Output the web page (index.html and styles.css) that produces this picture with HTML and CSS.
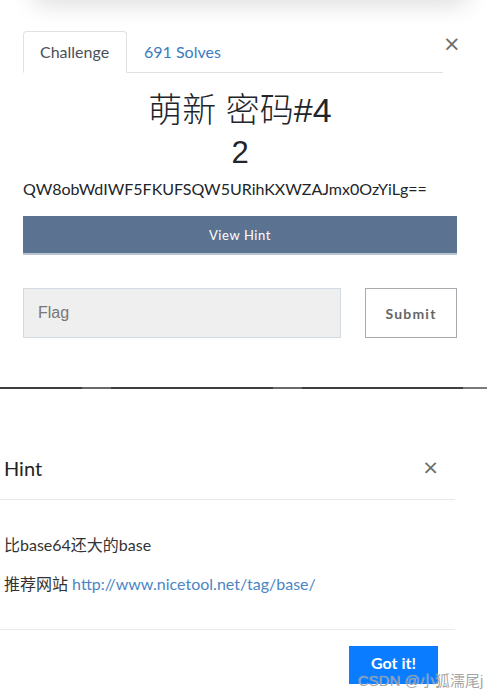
FILE: index.html
```html
<!DOCTYPE html>
<html lang="zh">
<head>
<meta charset="utf-8">
<link rel="stylesheet" href="styles.css">
</head>
<body>
<div class="page">
  <div class="card-shadow"></div>
  <section class="challenge">
    <div class="tabs-row">
      <ul class="tabs">
        <li class="tab active">Challenge</li>
        <li class="tab link">691 Solves</li>
      </ul>
      <span class="close">&times;</span>
    </div>
    <h1 class="title">萌新 密码#4</h1>
    <div class="value">2</div>
    <p class="desc">QW8obWdIWF5FKUFSQW5URihKXWZAJmx0OzYiLg==</p>
    <div class="hint-btn">View Hint</div>
    <div class="submit-row">
      <div class="flag-input">Flag</div>
      <div class="submit-btn">Submit</div>
    </div>
  </section>
  <div class="divider"></div>
  <section class="modal">
    <div class="modal-header">
      <span class="modal-title">Hint</span>
      <span class="modal-close">&times;</span>
    </div>
    <div class="modal-body">
      <p class="line">比base64还大的base</p>
      <p class="line">推荐网站 <span class="url">http://www.nicetool.net/tag/base/</span></p>
    </div>
    <div class="modal-footer">
      <div class="got-it">Got it!</div>
      <span class="watermark">CSDN @小狐濡尾j</span>
    </div>
  </section>
</div>
</body>
</html>
```

FILE: styles.css
```css
* { box-sizing: border-box; }
html, body { margin: 0; padding: 0; background: #fff; }
body {
  font-family: Lato, "Noto Sans CJK SC", sans-serif;
  color: #212529;
  width: 501px;
  height: 697px;
  overflow: hidden;
}
.page { position: relative; }

.card-shadow {
  height: 40px;
  margin: -40px 32px 0 32px;
  border-radius: 12px;
  background: #fff;
  box-shadow: 0 4px 24px rgba(0,0,0,0.14);
}

.challenge { padding: 0 44px 0 23px; }

.tabs-row {
  display: flex;
  align-items: flex-start;
  margin-top: 31px;
}
.tabs {
  flex: 1;
  display: flex;
  list-style: none;
  margin: 0;
  padding: 0;
  border-bottom: 1px solid #dee2e6;
}
.tab {
  font-size: 16px;
  line-height: 24px;
  padding: 8px 16px;
  border: 1px solid transparent;
  border-top-left-radius: 4px;
  border-top-right-radius: 4px;
  margin-bottom: -1px;
  color: #495057;
}
.tab.active {
  border-color: #dee2e6 #dee2e6 #fff;
  background: #fff;
  width: 104px;
}
.tab.link { color: #3a7cc2; }
.close {
  width: 14px;
  font-size: 21px;
  line-height: 24px;
  margin-top: 1px;
  color: #6c6c6c;
  font-family: "DejaVu Sans", sans-serif;
  text-align: center;
}

.title {
  margin: 17px 0 0;
  text-align: center;
  font-family: "Liberation Sans", "Noto Sans CJK SC", sans-serif;
  font-weight: 300;
  font-size: 34px;
  line-height: 40px;
  color: #212529;
}
.value {
  margin-top: 5px;
  text-align: center;
  font-family: "Liberation Sans", sans-serif;
  font-size: 31px;
  line-height: 36px;
}
.desc {
  margin: 7px 0 0;
  font-size: 16px;
  line-height: 22px;
}
.hint-btn {
  margin-top: 16px;
  height: 39px;
  background: #5b7290;
  border-bottom: 2px solid #b8c4d2;
  color: #fff;
  font-size: 13px;
  font-weight: 400;
  letter-spacing: 0.6px;
  display: flex;
  align-items: center;
  justify-content: center;
}
.submit-row {
  margin-top: 33px;
  display: flex;
  justify-content: space-between;
}
.flag-input {
  width: 318px;
  height: 50px;
  background: #efefef;
  border: 1px solid #d3dae2;
  padding-left: 14px;
  display: flex;
  align-items: center;
  font-family: "Liberation Sans", Arial, sans-serif;
  font-size: 16px;
  color: #777;
}
.submit-btn {
  width: 92px;
  height: 50px;
  border: 1px solid #a7aaae;
  display: flex;
  align-items: center;
  justify-content: center;
  font-size: 14px;
  font-weight: 700;
  letter-spacing: 1.2px;
  color: #666;
}

.divider {
  margin-top: 49px;
  width: 487px;
  height: 2px;
  background: linear-gradient(to right,
    #3f3f3f 0, #3f3f3f 82px, #6a6a6a 82px, #6a6a6a 111px,
    #3f3f3f 111px, #3f3f3f 273px, #6a6a6a 273px, #6a6a6a 302px,
    #3f3f3f 302px, #3f3f3f 463px, #7a7a7a 463px, #7a7a7a 487px);
}

.modal { width: 455px; }
.modal-header {
  margin-top: 47px;
  height: 64px;
  display: flex;
  align-items: center;
  justify-content: space-between;
  padding: 0 16px 0 4px;
  border-bottom: 1px solid #e4e8ec;
}
.modal-title {
  font-size: 20px;
  color: #222;
}
.modal-close {
  font-family: "DejaVu Sans", sans-serif;
  font-size: 20px;
  color: #6a6a6a;
  margin-top: -2px;
}
.modal-body {
  padding: 34px 0 34px 4px;
  border-bottom: 1px solid #eaeaea;
}
.line {
  margin: 0;
  font-size: 16px;
  line-height: 22px;
  color: #333;
}
.line + .line { margin-top: 17px; }
.url { color: #4a86c5; }

.modal-footer {
  position: relative;
  padding-top: 16px;
  display: flex;
  justify-content: flex-end;
  padding-right: 17px;
}
.got-it {
  width: 89px;
  height: 38px;
  background: #0a7cff;
  color: #fff;
  font-weight: 700;
  font-size: 16px;
  display: flex;
  align-items: center;
  justify-content: center;
  padding-bottom: 5px;
}
.watermark {
  position: absolute;
  left: 358px;
  top: 39px;
  white-space: nowrap;
  font-family: "Liberation Sans", "Noto Sans CJK SC", sans-serif;
  font-size: 15px;
  color: rgba(150,150,150,0.85);
  text-shadow: 0 0 1px rgba(255,255,255,0.6);
}
```
